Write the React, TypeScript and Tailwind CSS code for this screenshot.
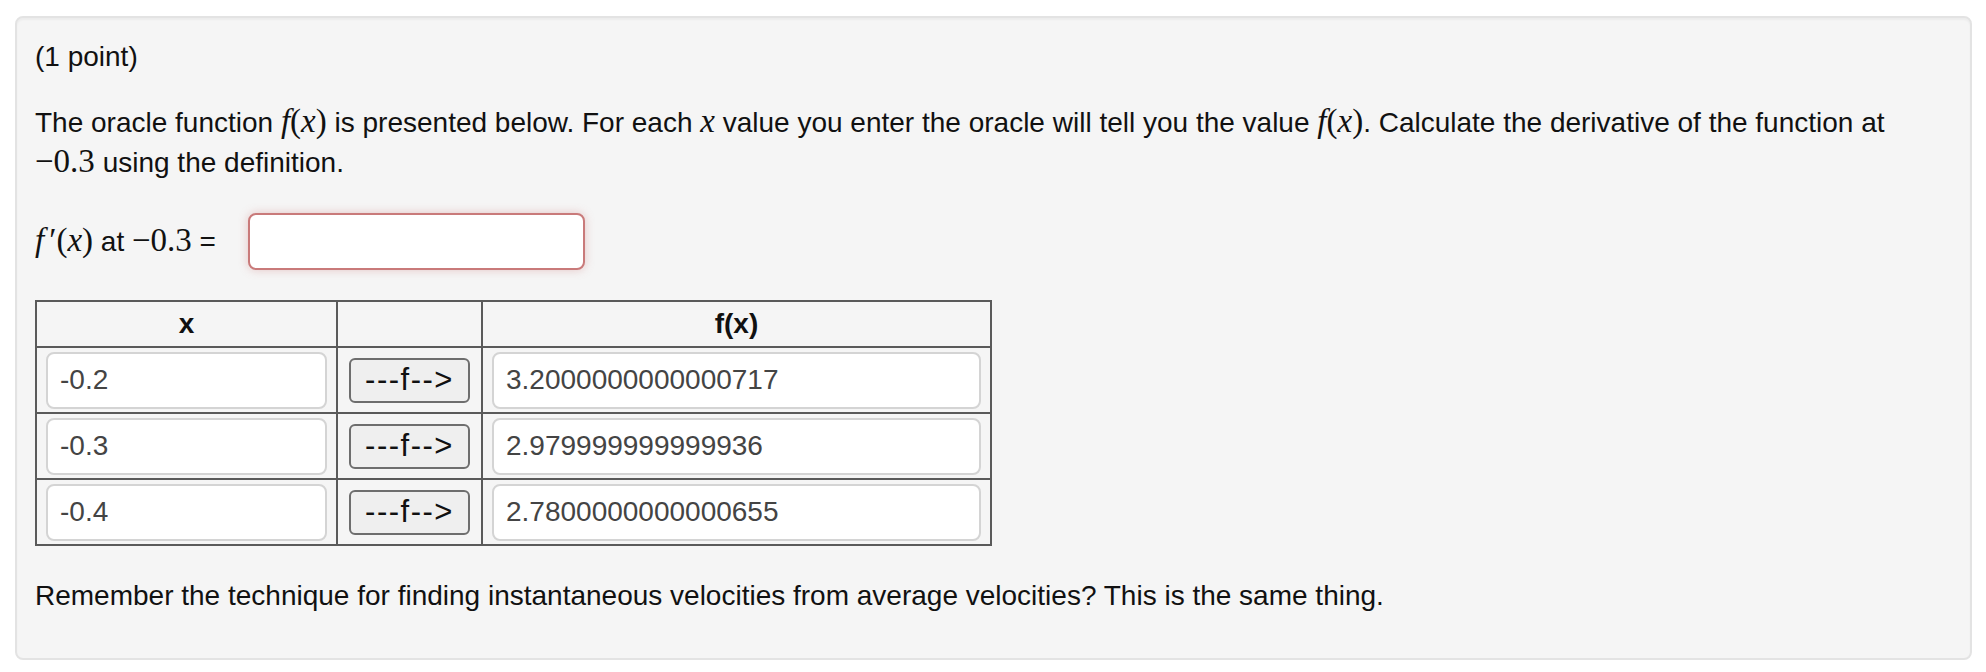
import React from 'react';

const rows = [
  { x: '-0.2', fx: '3.2000000000000717' },
  { x: '-0.3', fx: '2.979999999999936' },
  { x: '-0.4', fx: '2.7800000000000655' },
];

function M({ children }: { children: React.ReactNode }) {
  return <span className="font-['Liberation_Serif',serif] text-[33px] leading-none">{children}</span>;
}

function Fx() {
  return (
    <M>
      <i>f</i>(<i>x</i>)
    </M>
  );
}

export default function App() {
  return (
    <div className="min-h-screen bg-white pt-[16px] pl-[15px] font-['Liberation_Sans',Arial,sans-serif] text-[28px] leading-[40px] text-[#111]">
      <div className="w-[1957px] h-[644px] rounded-[8px] border-2 border-[#e3e3e3] bg-[#f5f5f5] px-[18px] pt-[19px] shadow-[inset_0_2px_2px_rgba(0,0,0,0.04)]">
        <div>(1 point)</div>

        <p className="mt-[26px]">
          The oracle function <Fx /> is presented below. For each <M><i>x</i></M> value you enter the oracle will tell
          you the value <Fx />. Calculate the derivative of the function at
          <br />
          <M>−0.3</M> using the definition.
        </p>

        <div className="mt-[30px] flex items-center">
          <span className="whitespace-nowrap">
            <M>
              <i>f</i>
              <span className="ml-[5px]">′</span>(<i>x</i>)
            </M>{' '}
            at <M>−0.3</M> =
          </span>
          <input
            className="ml-[32px] h-[57px] w-[337px] rounded-[8px] border-2 border-[#c97a7a] bg-white px-3 shadow-[0_0_10px_rgba(200,110,110,0.35)] outline-none"
            defaultValue=""
          />
        </div>

        <table className="mt-[30px] w-[957px] border-collapse border-2 border-[#5a5a5a]">
          <thead>
            <tr className="h-[46px]">
              <th className="w-[301px] border-2 border-[#5a5a5a] text-center font-bold">x</th>
              <th className="w-[145px] border-2 border-[#5a5a5a]"></th>
              <th className="border-2 border-[#5a5a5a] text-center font-bold">f(x)</th>
            </tr>
          </thead>
          <tbody>
            {rows.map((r) => (
              <tr key={r.x} className="h-[66px]">
                <td className="border-2 border-[#5a5a5a] px-[9px] py-[3px]">
                  <input
                    className="h-[57px] w-full rounded-[8px] border-2 border-[#d4d4d4] bg-white px-[12px] text-[#444] outline-none"
                    defaultValue={r.x}
                  />
                </td>
                <td className="border-2 border-[#5a5a5a] text-center">
                  <button className="h-[45px] w-[121px] rounded-[6px] border-2 border-[#6e6e6e] bg-[#efefef] text-[31px] tracking-[1.5px] text-[#111]">
                    ---f--&gt;
                  </button>
                </td>
                <td className="border-2 border-[#5a5a5a] px-[9px] py-[3px]">
                  <input
                    className="h-[57px] w-full rounded-[8px] border-2 border-[#d4d4d4] bg-white px-[12px] text-[#444] outline-none"
                    defaultValue={r.fx}
                  />
                </td>
              </tr>
            ))}
          </tbody>
        </table>

        <p className="mt-[30px]">
          Remember the technique for finding instantaneous velocities from average velocities? This is the same thing.
        </p>
      </div>
    </div>
  );
}
